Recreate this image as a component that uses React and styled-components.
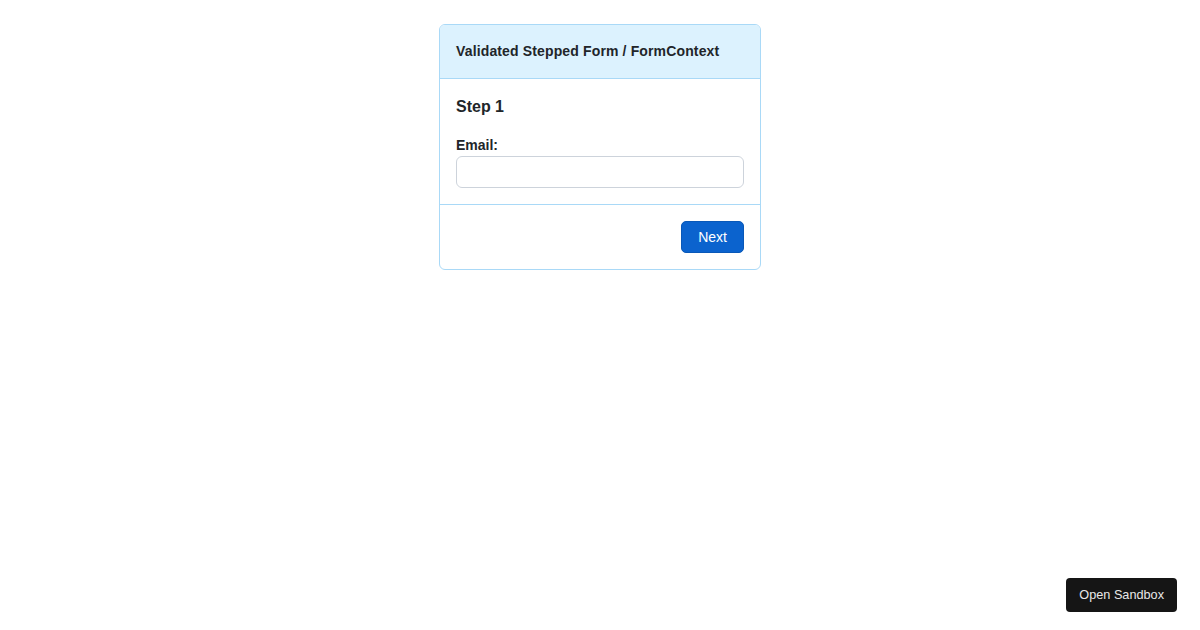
import styled, { createGlobalStyle } from "styled-components";

const GlobalStyle = createGlobalStyle`
  body {
    margin: 0;
    background: #ffffff;
    font-family: "Liberation Sans", Arial, sans-serif;
    color: #212529;
  }
`;

function App() {
  return (
    <>
      <GlobalStyle />
      <Page>
        <Card>
          <CardHeader>Validated Stepped Form / FormContext</CardHeader>
          <CardBody>
            <StepTitle>Step 1</StepTitle>
            <Field>
              <Label htmlFor="email">Email:</Label>
              <Input id="email" type="email" />
            </Field>
          </CardBody>
          <CardFooter>
            <Button type="button">Next</Button>
          </CardFooter>
        </Card>
      </Page>
      <SandboxButton type="button">Open Sandbox</SandboxButton>
    </>
  );
}

const Page = styled.div`
  display: flex;
  justify-content: center;
  padding-top: 24px;
`;

const Card = styled.div`
  width: 322px;
  box-sizing: border-box;
  border: 1px solid #a9d9f7;
  border-radius: 6px;
  overflow: hidden;
  background: #ffffff;
`;

const CardHeader = styled.div`
  background: #dcf2fe;
  border-bottom: 1px solid #a9d9f7;
  padding: 16px;
  font-size: 14px;
  line-height: 21px;
  font-weight: 700;
  letter-spacing: 0.14px;
  color: #212529;
`;

const CardBody = styled.div`
  padding: 16px;
  display: flex;
  flex-direction: column;
  gap: 19px;
`;

const StepTitle = styled.h3`
  margin: 1px 0 0;
  font-size: 16px;
  line-height: 22px;
  font-weight: 700;
`;

const Field = styled.div`
  display: flex;
  flex-direction: column;
  gap: 2px;
`;

const Label = styled.label`
  font-size: 14px;
  line-height: 17px;
  font-weight: 700;
`;

const Input = styled.input`
  box-sizing: border-box;
  width: 100%;
  height: 32px;
  border: 1px solid #cdd3db;
  border-radius: 6px;
  padding: 0 10px;
  font-size: 14px;
  font-family: inherit;
  outline: none;
`;

const CardFooter = styled.div`
  border-top: 1px solid #a9d9f7;
  padding: 16px;
  display: flex;
  justify-content: flex-end;
`;

const Button = styled.button`
  height: 32px;
  padding: 0 16px;
  background: #0b63ce;
  color: #ffffff;
  border: 1px solid #0958b8;
  border-radius: 5px;
  font-family: inherit;
  font-size: 14px;
  cursor: pointer;
`;

const SandboxButton = styled.button`
  position: fixed;
  right: 23px;
  bottom: 18px;
  height: 34px;
  padding: 0 13px;
  background: #151515;
  color: #e8e8e8;
  border: none;
  border-radius: 4px;
  font-family: inherit;
  font-size: 12.7px;
  line-height: 32px;
  cursor: pointer;
`;

export default App;
